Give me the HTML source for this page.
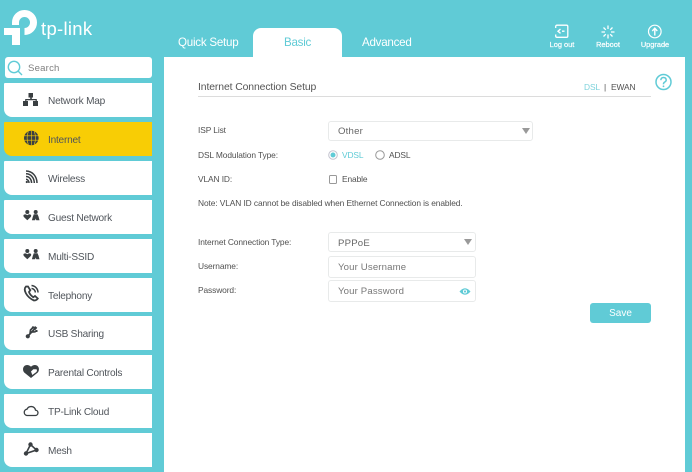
<!DOCTYPE html>
<html><head><meta charset="utf-8"><style>
*{box-sizing:border-box}
html,body{margin:0;padding:0}
body{width:692px;height:472px;position:relative;overflow:hidden;background:#60cbd6;font-family:"Liberation Sans",sans-serif;color:#4a4a4a}
.a{position:absolute;white-space:nowrap}
.item{position:absolute;left:4px;width:148px;height:34px;background:#fff;border-bottom-left-radius:8px;border-top-left-radius:1px}
.item span{position:absolute;left:44px;top:.5px;line-height:35px;font-size:10.1px;letter-spacing:-.22px;color:#50555b}
.item svg{position:absolute;left:15px;top:5px;width:24px;height:24px;fill:#3a3f42}
.tab{font-size:11.6px;letter-spacing:-.25px;color:#fff;top:36px;line-height:13px}
.tl{font-size:7.4px;color:#fff;top:40px;line-height:9px;text-align:center;width:40px;-webkit-text-stroke:.2px #fff}
.t{font-size:8.4px;letter-spacing:-.1px;line-height:10px;color:#505050}
.lb{left:198px}
.box{position:absolute;background:#fff;border:1px solid #e8eaea;border-radius:3px;font-size:9.6px;color:#666;letter-spacing:.2px}
.box b{font-weight:400;position:absolute;left:9px;top:0}
.ar{position:absolute;width:0;height:0;border-left:4px solid transparent;border-right:4px solid transparent;border-top:6px solid #999}
</style></head><body>
<svg class="a" style="left:0;top:0" width="40" height="48" viewBox="0 0 40 48"><path d="M15.500 25V22.500A9 9 0 1 1 24.500 31.500" fill="none" stroke="#fff" stroke-width="7"/><path d="M4 28H20V45H12V35H4z" fill="#fff"/></svg>
<div class="a" style="left:41px;top:17px;font-size:18.500px;line-height:24px;color:#fff;letter-spacing:.3px">tp-link</div>

<div class="a tab" style="left:178px">Quick Setup</div>
<div class="a" style="left:253px;top:28px;width:89px;height:30px;background:#fff;border-radius:8px 8px 0 0"></div>
<div class="a tab" style="left:284px;color:#60cbd6">Basic</div>
<div class="a tab" style="left:362px">Advanced</div>

<svg class="a" style="left:553px;top:23px" width="18" height="16" viewBox="0 0 18 16" fill="none" stroke="#fff" stroke-width="1.300"><path d="M2.700 5V3.500Q2.700 2.200 4 2.200H13.500Q14.800 2.200 14.800 3.500V13Q14.800 14.300 13.500 14.300H4Q2.700 14.300 2.700 13V11.500"/><path d="M11.500 8.200H9M7.500 6L5 8.200L7.500 10.400" stroke-width="1.400"/></svg>
<div class="a tl" style="left:542px">Log out</div>
<svg class="a" style="left:600px;top:24px" width="16" height="16" viewBox="0 0 16 16" fill="none" stroke="#fff" stroke-width="1.300"><path d="M8 1.500V5M8 10.500V14.500M1.500 8H5M11 8H14.500M3.500 3.500L5.800 5.800M12.500 3.500L10.200 5.800M3.500 12.500L5.800 10.200M12.500 12.500L10.200 10.200"/></svg>
<div class="a tl" style="left:588px">Reboot</div>
<svg class="a" style="left:647px;top:24px" width="15" height="15" viewBox="0 0 15 15" fill="none" stroke="#fff" stroke-width="1.200"><circle cx="7.800" cy="7.500" r="6.300"/><path d="M7.800 11.500V5M5.300 7L7.800 4.200L10.300 7" stroke-width="1.400"/></svg>
<div class="a tl" style="left:635px">Upgrade</div>

<div class="a" style="left:5px;top:57px;width:147px;height:21px;background:#fff;border-radius:3px"></div>
<svg class="a" style="left:7px;top:60px" width="16" height="16" viewBox="0 0 16 16" fill="none" stroke="#60cbd6" stroke-width="1.400"><circle cx="7" cy="7" r="5.700"/><path d="M11 11L15 15"/></svg>
<div class="a" style="left:28px;top:63px;font-size:9.600px;line-height:12px;color:#808080;letter-spacing:.2px">Search</div>

<div class="item" style="top:83px"><svg viewBox="0 0 24 24"><path d="M9.500 5H14V9.500H12.800V11H17.800V13H19V18H14V13H16.600V12.200H7.400V13H9V18H4V13H6.200V11H11.200V9.500H9.500z"/></svg><span>Network Map</span></div>
<div class="item" style="top:122px;background:#f8cd05"><svg viewBox="0 0 24 24"><circle cx="12.300" cy="11" r="7.300"/><path d="M5 8.800h14.600M5 13.200h14.600M12.300 3.700v14.600M9.300 4.500q-2.400 6.500 0 13M15.300 4.500q2.400 6.500 0 13" stroke="#f8cd05" stroke-width=".6" fill="none"/></svg><span>Internet</span></div>
<div class="item" style="top:161px"><svg viewBox="0 0 24 24" style="fill:none" stroke="#3a3f42" stroke-width="1.500"><path d="M7 5C13.500 5 18 10.500 18 17M7 7.800C11.800 7.800 15.300 12 15.300 17M7 10.500C10.300 10.500 12.600 13.500 12.600 17M7 13.300C8.800 13.300 10 15 10 17"/><circle cx="7.800" cy="16" r="1.100" fill="#3a3f42" stroke="none"/></svg><span>Wireless</span></div>
<div class="item" style="top:200px"><svg viewBox="0 0 24 24"><circle cx="8.300" cy="7" r="2"/><path d="M4.800 9.800c.9-.7 2.500-.5 3.500.4 1-.9 2.600-1.100 3.500-.4.800.9.300 1.800-.3 2.400L8.300 15.300l-3.200-3.100c-.6-.6-1.100-1.500-.3-2.400z"/><circle cx="16.700" cy="7" r="2"/><path d="M14.800 9.300H18.500L19.500 11.500L20.500 15.300H17.300L16.700 13.500L16.100 15.300H12.900L13.900 11.500z"/></svg><span>Guest Network</span></div>
<div class="item" style="top:239px"><svg viewBox="0 0 24 24"><circle cx="8.300" cy="7" r="2"/><path d="M4.800 9.800c.9-.7 2.500-.5 3.500.4 1-.9 2.600-1.100 3.500-.4.800.9.300 1.800-.3 2.400L8.300 15.300l-3.200-3.100c-.6-.6-1.100-1.500-.3-2.400z"/><circle cx="16.700" cy="7" r="2"/><path d="M14.800 9.300H18.500L19.500 11.500L20.500 15.300H17.300L16.700 13.500L16.100 15.300H12.900L13.900 11.500z"/></svg><span>Multi-SSID</span></div>
<div class="item" style="top:278px"><svg viewBox="0 0 24 24" style="fill:none" stroke="#3a3f42"><g transform="translate(.5 -2)"><path d="M6.500 5.500Q4 8 6.500 12.500T14.500 19.500Q17 19.500 18.300 17.500L15.500 15L13.800 16.200Q10.500 14 9.500 11L10.800 9.200L8.500 5.500z" stroke-width="1.800"/><path d="M12 4.500a7 7 0 0 1 6.500 7M12 7.500a4 4 0 0 1 3.800 4" stroke-width="1.500"/></g></svg><span>Telephony</span></div>
<div class="item" style="top:316px"><svg viewBox="0 0 24 24"><g fill="none" stroke="#3a3f42" stroke-width="1.700"><path d="M8.500 15.500L16.500 7M11 12.800L11.500 9L13.500 7M13 11L16 10.800L17 10"/></g><circle cx="8.800" cy="15.300" r="2.100"/><circle cx="14" cy="6.500" r="1.200"/><path d="M16 5l2.300 1.700-1.700 2.300-2.300-1.700zM16.500 9h2v2h-2z"/></svg><span>USB Sharing</span></div>
<div class="item" style="top:355px"><svg viewBox="0 0 24 24"><path d="M12 18L5.200 12.500C2.800 9.500 4.300 5 8 5 9.600 5 11 5.700 12 6.800 13 5.700 14.400 5 16 5 19.700 5 21.200 9.500 18.800 12.500z"/><path d="M12 11.500L14.300 9.200H17.500Q18.600 10.800 17 12.300L13.300 15z" fill="#fff"/></svg><span>Parental Controls</span></div>
<div class="item" style="top:394px"><svg viewBox="0 0 24 24" style="fill:none" stroke="#3a3f42" stroke-width="1.300"><path d="M7.800 16.500H16a2.700 2.700 0 0 0 .5-5.400A4.500 4.500 0 0 0 8 10.200 3.200 3.200 0 0 0 7.800 16.500z"/></svg><span>TP-Link Cloud</span></div>
<div class="item" style="top:433px"><svg viewBox="0 0 24 24" style="fill:none" stroke="#3a3f42" stroke-width="1.600"><path d="M11.500 6.500L7 15.500L17.500 12z"/><circle cx="11.500" cy="6.500" r="2.200" fill="#3a3f42" stroke="none"/><circle cx="7" cy="15.500" r="2.200" fill="#3a3f42" stroke="none"/><circle cx="17.500" cy="12" r="2.200" fill="#3a3f42" stroke="none"/></svg><span>Mesh</span></div>

<div class="a" style="left:164px;top:57px;width:521px;height:415px;background:#fff"></div>
<div class="a" style="left:198px;top:80.500px;font-size:10.400px;line-height:13px;color:#555;letter-spacing:-.1px">Internet Connection Setup</div>
<div class="a" style="left:198px;top:96px;width:453px;height:1px;background:#dcdcdc"></div>
<div class="a t" style="left:584px;top:82px;color:#7fd3dc">DSL</div>
<div class="a t" style="left:604px;top:82px">|</div>
<div class="a t" style="left:611px;top:82px">EWAN</div>
<svg class="a" style="left:655px;top:73px" width="17" height="18" viewBox="0 0 17 18" fill="none" stroke="#60cbd6" stroke-width="1.500"><circle cx="8.500" cy="9" r="7.500"/><path d="M5.800 7.200Q6 4.500 8.500 4.500T11.200 7Q11.200 8.300 9.800 9T8.500 11.300"/><circle cx="8.500" cy="13.300" r=".9" fill="#60cbd6" stroke="none"/></svg>

<div class="a t lb" style="top:125px">ISP List</div>
<div class="box" style="left:328px;top:121px;width:205px;height:20px"><b style="line-height:19px">Other</b></div>
<div class="ar" style="left:522px;top:128px"></div>

<div class="a t lb" style="top:150px">DSL Modulation Type:</div>
<svg class="a" style="left:328px;top:150px" width="10" height="10"><circle cx="5" cy="5" r="4.300" fill="#fff" stroke="#aab" stroke-opacity=".7"/><circle cx="5" cy="5" r="2.500" fill="#60cbd6"/></svg>
<div class="a t" style="left:342px;top:150px;color:#60cbd6">VDSL</div>
<svg class="a" style="left:375px;top:150px" width="10" height="10"><circle cx="5" cy="5" r="4.300" fill="#fff" stroke="#999"/></svg>
<div class="a t" style="left:389px;top:150px">ADSL</div>

<div class="a t lb" style="top:174px">VLAN ID:</div>
<div class="a" style="left:329px;top:175px;width:8px;height:9px;border:1px solid #999;border-radius:1.500px"></div>
<div class="a t" style="left:342px;top:174px">Enable</div>

<div class="a t lb" style="top:198px">Note: VLAN ID cannot be disabled when Ethernet Connection is enabled.</div>

<div class="a t lb" style="top:237px">Internet Connection Type:</div>
<div class="box" style="left:328px;top:232px;width:148px;height:20px"><b style="line-height:21px">PPPoE</b></div>
<div class="ar" style="left:464px;top:239px"></div>

<div class="a t lb" style="top:261px">Username:</div>
<div class="box" style="left:328px;top:256px;width:148px;height:22px;letter-spacing:.15px;color:#777"><b style="line-height:21px">Your Username</b></div>

<div class="a t lb" style="top:285px">Password:</div>
<div class="box" style="left:328px;top:280px;width:148px;height:22px;letter-spacing:.15px;color:#777"><b style="line-height:21px">Your Password</b></div>
<svg class="a" style="left:459px;top:287px" width="12" height="9" viewBox="0 0 12 9"><path d="M.500 4.500Q6-2 11.500 4.500Q6 11 .500 4.500z" fill="#60cbd6"/><circle cx="6" cy="4.500" r="2" fill="#fff"/><circle cx="6" cy="4.500" r="1.100" fill="#60cbd6"/></svg>

<div class="a" style="left:590px;top:303px;width:61px;height:20px;background:#60cbd6;border-radius:3px;color:#fff;font-size:10px;line-height:21px;text-align:center">Save</div>
</body></html>
